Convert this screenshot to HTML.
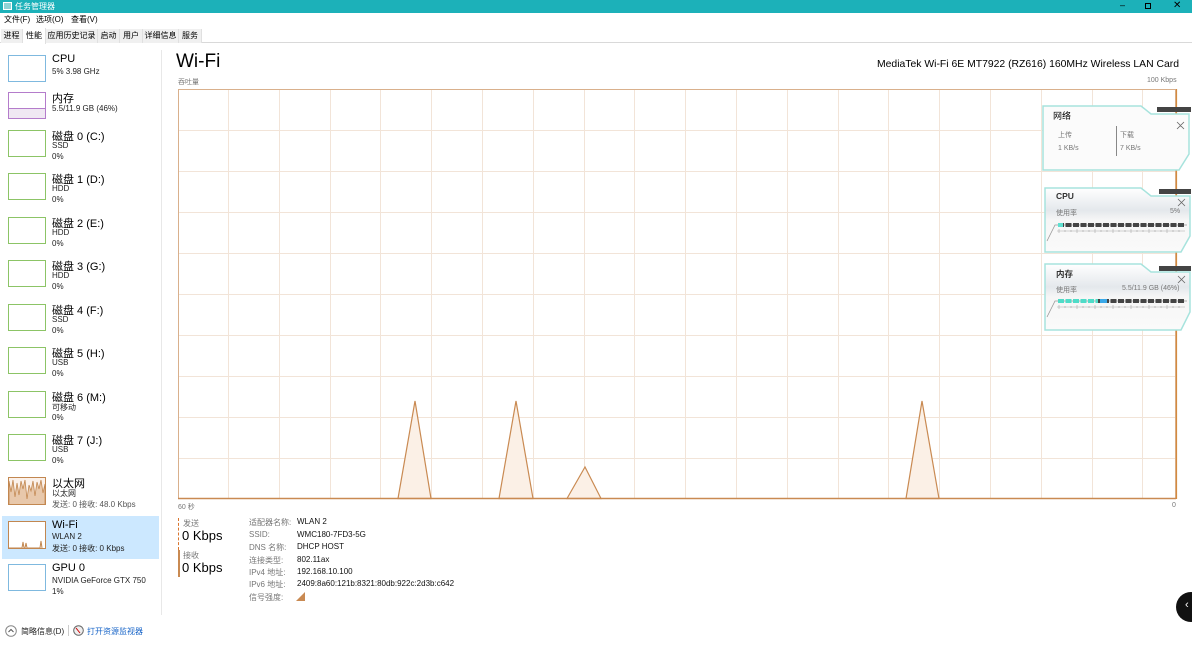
<!DOCTYPE html>
<html><head><meta charset="utf-8">
<style>
*{margin:0;padding:0;box-sizing:border-box}
body{width:1192px;height:646px;overflow:hidden;background:#fff;font-family:"Liberation Sans","Noto Sans CJK SC",sans-serif;color:#000;position:relative}
.a{position:absolute;white-space:nowrap}
.tb{left:0;top:0;width:1192px;height:13px;background:#1cb1b9}
.menu{top:14px;font-size:8px}
.tabs{top:29px;left:0;width:1192px;height:14px;border-bottom:1px solid #d9d9d9}
.tab{position:absolute;top:29px;height:14px;font-size:8px;line-height:14px;text-align:center;border-right:1px solid #e0e0e0;background:#f0f0f0;overflow:hidden}
.th{position:absolute;left:8px;width:38px;height:27px;border:1px solid}
.t1{font-size:11px;left:52px}
.t2{font-size:8px;left:52px;color:#222}
.lbl{font-size:8px;color:#777}
.val{font-size:8px;color:#111}
</style></head><body>
<div class="a tb"></div>
<div class="a" style="left:3px;top:2px;width:9px;height:8px;border:1px solid #fff;background:#8fd3d6"></div>
<div class="a" style="left:15px;top:1px;font-size:8px;color:#fff">任务管理器</div>
<div class="a" style="left:1120px;top:0;font-size:9px;color:#000">&#8211;</div>
<div class="a" style="left:1145px;top:3px;width:6px;height:6px;border:1px solid #000"></div>
<div class="a" style="left:1173px;top:0;font-size:10px">✕</div>
<div class="a menu" style="left:4px">文件(F)</div>
<div class="a menu" style="left:36px">选项(O)</div>
<div class="a menu" style="left:71px">查看(V)</div>
<div class="a tabs"></div>
<div class="tab" style="left:1px;width:22px">进程</div>
<div class="tab" style="left:23px;width:23px;background:#fff;top:28px;height:16px;line-height:16px">性能</div>
<div class="tab" style="left:46px;width:52px">应用历史记录</div>
<div class="tab" style="left:98px;width:22px">启动</div>
<div class="tab" style="left:120px;width:23px">用户</div>
<div class="tab" style="left:143px;width:36px">详细信息</div>
<div class="tab" style="left:179px;width:23px">服务</div>

<div class="a" style="left:161px;top:50px;width:1px;height:565px;background:#e8e8e8"></div>
<div class="a" style="left:2px;top:516px;width:157px;height:43px;background:#cce8ff"></div>

<div class="th" style="top:55px;border-color:#7fb9df"></div>
<div class="a t1" style="top:53px">CPU</div><div class="a t2" style="top:67px">5% 3.98 GHz</div>
<div class="th" style="top:92px;border-color:#b47ccb"><div style="position:absolute;left:0;right:0;bottom:0;height:10px;background:#f0e8f3;border-top:1px solid #b47ccb"></div></div>
<div class="a t1" style="top:90px">内存</div><div class="a t2" style="top:104px">5.5/11.9 GB (46%)</div>

<div class="th" style="top:130px;border-color:#8cc466"></div><div class="a t1" style="top:128px">磁盘 0 (C:)</div><div class="a t2" style="top:141px">SSD</div><div class="a t2" style="top:152px">0%</div>
<div class="th" style="top:173px;border-color:#8cc466"></div><div class="a t1" style="top:171px">磁盘 1 (D:)</div><div class="a t2" style="top:184px">HDD</div><div class="a t2" style="top:195px">0%</div>
<div class="th" style="top:217px;border-color:#8cc466"></div><div class="a t1" style="top:215px">磁盘 2 (E:)</div><div class="a t2" style="top:228px">HDD</div><div class="a t2" style="top:239px">0%</div>
<div class="th" style="top:260px;border-color:#8cc466"></div><div class="a t1" style="top:258px">磁盘 3 (G:)</div><div class="a t2" style="top:271px">HDD</div><div class="a t2" style="top:282px">0%</div>
<div class="th" style="top:304px;border-color:#8cc466"></div><div class="a t1" style="top:302px">磁盘 4 (F:)</div><div class="a t2" style="top:315px">SSD</div><div class="a t2" style="top:326px">0%</div>
<div class="th" style="top:347px;border-color:#8cc466"></div><div class="a t1" style="top:345px">磁盘 5 (H:)</div><div class="a t2" style="top:358px">USB</div><div class="a t2" style="top:369px">0%</div>
<div class="th" style="top:391px;border-color:#8cc466"></div><div class="a t1" style="top:389px">磁盘 6 (M:)</div><div class="a t2" style="top:402px">可移动</div><div class="a t2" style="top:413px">0%</div>
<div class="th" style="top:434px;border-color:#8cc466"></div><div class="a t1" style="top:432px">磁盘 7 (J:)</div><div class="a t2" style="top:445px">USB</div><div class="a t2" style="top:456px">0%</div>

<svg class="a" style="left:8px;top:477px" width="38" height="28"><rect x="0.5" y="0.5" width="37" height="27" fill="#fbf1ea" stroke="#c28750"/>
<polyline points="1,27 1,4 3,15 5,3 7,20 9,6 11,18 13,4 15,12 17,3 19,22 21,8 23,14 25,4 27,19 29,5 31,12 33,3 35,16 37,7 37,27" fill="#e8c8ab" stroke="#c28750" stroke-width="0.8"/></svg>
<div class="a t1" style="top:475px">以太网</div><div class="a t2" style="top:488px">以太网</div><div class="a t2" style="top:499px;color:#555">发送: 0 接收: 48.0 Kbps</div>

<svg class="a" style="left:8px;top:521px" width="38" height="28"><rect x="0.5" y="0.5" width="37" height="27" fill="#fff" stroke="#c28750"/>
<polyline points="1,27 14,27 15,21 16,27 17,27 18,22 19,27 32,27 33,20 34,27" fill="none" stroke="#c28750"/></svg>
<div class="a t1" style="top:519px">Wi-Fi</div><div class="a t2" style="top:532px">WLAN 2</div><div class="a t2" style="top:543px">发送: 0 接收: 0 Kbps</div>

<div class="th" style="top:564px;border-color:#7fb9df"></div>
<div class="a t1" style="top:562px">GPU 0</div><div class="a t2" style="top:576px">NVIDIA GeForce GTX 750</div><div class="a t2" style="top:587px">1%</div>

<div class="a" style="left:176px;top:51px;font-size:19px">Wi-Fi</div>
<div class="a" style="left:877px;top:59px;font-size:10.4px">MediaTek Wi-Fi 6E MT7922 (RZ616) 160MHz Wireless LAN Card</div>
<div class="a lbl" style="left:178px;top:77px;font-size:7px">吞吐量</div>
<div class="a lbl" style="left:1147px;top:77px;font-size:7px">100 Kbps</div>

<svg class="a" style="left:0;top:0" width="1192" height="646">
<g stroke="#f2e4d8" stroke-width="1">
<line x1="228.5" y1="89" x2="228.5" y2="499"/><line x1="279.5" y1="89" x2="279.5" y2="499"/><line x1="330.5" y1="89" x2="330.5" y2="499"/><line x1="380.5" y1="89" x2="380.5" y2="499"/><line x1="431.5" y1="89" x2="431.5" y2="499"/><line x1="482.5" y1="89" x2="482.5" y2="499"/><line x1="533.5" y1="89" x2="533.5" y2="499"/><line x1="584.5" y1="89" x2="584.5" y2="499"/><line x1="634.5" y1="89" x2="634.5" y2="499"/><line x1="685.5" y1="89" x2="685.5" y2="499"/><line x1="736.5" y1="89" x2="736.5" y2="499"/><line x1="787.5" y1="89" x2="787.5" y2="499"/><line x1="838.5" y1="89" x2="838.5" y2="499"/><line x1="888.5" y1="89" x2="888.5" y2="499"/><line x1="939.5" y1="89" x2="939.5" y2="499"/><line x1="990.5" y1="89" x2="990.5" y2="499"/><line x1="1041.5" y1="89" x2="1041.5" y2="499"/><line x1="1092.5" y1="89" x2="1092.5" y2="499"/><line x1="1142.5" y1="89" x2="1142.5" y2="499"/>
<line x1="178" y1="130.5" x2="1176" y2="130.5"/><line x1="178" y1="171.5" x2="1176" y2="171.5"/><line x1="178" y1="212.5" x2="1176" y2="212.5"/><line x1="178" y1="253.5" x2="1176" y2="253.5"/><line x1="178" y1="294.5" x2="1176" y2="294.5"/><line x1="178" y1="335.5" x2="1176" y2="335.5"/><line x1="178" y1="376.5" x2="1176" y2="376.5"/><line x1="178" y1="417.5" x2="1176" y2="417.5"/><line x1="178" y1="458.5" x2="1176" y2="458.5"/>
</g>
<rect x="178.5" y="89.5" width="997" height="409" fill="none" stroke="#d9b08c"/>
<g fill="#fbf0e6" stroke="#c98a52" stroke-width="1.2">
<polygon points="398,498.5 415,401 431,498.5"/><polygon points="499,498.5 516,401 533,498.5"/><polygon points="567,498.5 585,467 601,498.5"/><polygon points="906,498.5 922,401 939,498.5"/>
</g>
<line x1="178" y1="498.5" x2="1176" y2="498.5" stroke="#c98a52" stroke-width="1.5"/>
<line x1="1176.5" y1="89" x2="1176.5" y2="499" stroke="#d48a3e" stroke-width="1.2"/>
</svg>
<div class="a lbl" style="left:178px;top:502px;font-size:7px">60 秒</div>
<div class="a lbl" style="left:1172px;top:502px;font-size:7px">0</div>

<div class="a" style="left:178px;top:518px;width:0;height:32px;border-left:1px dashed #d9762f"></div>
<div class="a lbl" style="left:183px;top:518px">发送</div>
<div class="a" style="left:182px;top:528px;font-size:13px">0 Kbps</div>
<div class="a" style="left:178px;top:550px;width:2px;height:27px;background:#c98a52"></div>
<div class="a lbl" style="left:183px;top:550px">接收</div>
<div class="a" style="left:182px;top:560px;font-size:13px">0 Kbps</div>

<div class="a lbl" style="left:249px;top:517px">适配器名称:</div><div class="a val" style="left:297px;top:517px">WLAN 2</div>
<div class="a lbl" style="left:249px;top:530px">SSID:</div><div class="a val" style="left:297px;top:530px">WMC180-7FD3-5G</div>
<div class="a lbl" style="left:249px;top:542px">DNS 名称:</div><div class="a val" style="left:297px;top:542px">DHCP HOST</div>
<div class="a lbl" style="left:249px;top:555px">连接类型:</div><div class="a val" style="left:297px;top:555px">802.11ax</div>
<div class="a lbl" style="left:249px;top:567px">IPv4 地址:</div><div class="a val" style="left:297px;top:567px">192.168.10.100</div>
<div class="a lbl" style="left:249px;top:579px">IPv6 地址:</div><div class="a val" style="left:297px;top:579px">2409:8a60:121b:8321:80db:922c:2d3b:c642</div>
<div class="a lbl" style="left:249px;top:592px">信号强度:</div>
<svg class="a" style="left:295px;top:591px" width="12" height="10"><polygon points="1,10 10,10 10,1" fill="#c98a52"/></svg>

<svg class="a" style="left:5px;top:625px" width="12" height="12"><circle cx="6" cy="6" r="5.3" fill="none" stroke="#888"/><polyline points="3.5,7 6,4.5 8.5,7" fill="none" stroke="#555"/></svg>
<div class="a" style="left:21px;top:626px;font-size:8px;color:#222">简略信息(D)</div>
<div class="a" style="left:68px;top:625px;width:1px;height:11px;background:#ccc"></div>
<svg class="a" style="left:73px;top:625px" width="11" height="11"><circle cx="5.5" cy="5.5" r="4.8" fill="#eee" stroke="#666"/><line x1="3" y1="3" x2="7" y2="8" stroke="#c00"/></svg>
<div class="a" style="left:87px;top:626px;font-size:8px;color:#1a66c8">打开资源监视器</div>

<div class="a" style="left:1176px;top:592px;width:30px;height:30px;border-radius:50%;background:#111"></div>
<div class="a" style="left:1185px;top:599px;color:#fff;font-size:11px">‹</div>

<svg class="a" style="left:1041px;top:104px" width="151" height="240">
<defs><linearGradient id="g" x1="0" y1="0" x2="0" y2="1"><stop offset="0" stop-color="#fff"/><stop offset="0.35" stop-color="#e4e8ec"/><stop offset="0.5" stop-color="#f6f6f6"/><stop offset="1" stop-color="#fafafa"/></linearGradient></defs>
<g fill="#fbfbfb" stroke="#a7e3dd" stroke-width="1.5">
<polygon points="2,2 100,2 110,10 148,10 148,50 138,66 2,66"/>
<polygon points="4,84 100,84 110,92 149,92 149,132 140,148 4,148" fill="url(#g)"/>
<polygon points="4,160 100,160 110,168 149,168 149,208 140,226 4,226" fill="url(#g)"/>
</g>
<g fill="#444"><rect x="116" y="3" width="34" height="5"/><rect x="118" y="85" width="32" height="5"/><rect x="118" y="162" width="32" height="5"/></g>
<g stroke="#666" stroke-width="0.8"><path d="M136,18l7,7M143,18l-7,7M137,95l7,7M144,95l-7,7M137,172l7,7M144,172l-7,7"/></g>
<line x1="75.5" y1="22" x2="75.5" y2="52" stroke="#888"/>
<path d="M6,137 L14,121 L146,121" fill="none" stroke="#999" stroke-width="0.8"/>
<path d="M6,213 L14,197 L146,197" fill="none" stroke="#999" stroke-width="0.8"/>
<line x1="17" y1="121" x2="143" y2="121" stroke="#444" stroke-width="4" stroke-dasharray="6,1.5"/>
<line x1="17" y1="121" x2="22" y2="121" stroke="#5ee0d0" stroke-width="4"/>
<line x1="17" y1="197" x2="143" y2="197" stroke="#444" stroke-width="4" stroke-dasharray="6,1.5"/>
<line x1="17" y1="197" x2="57" y2="197" stroke="#4fdcc8" stroke-width="4" stroke-dasharray="6,1.5"/>
<line x1="59" y1="197" x2="66" y2="197" stroke="#3aa8e8" stroke-width="4"/>
<g stroke="#aaa" stroke-width="0.6"><path d="M16,127h128M16,203h128"/>
<path d="M18,125v4M24,126v2M30,126v2M36,125v4M42,126v2M48,126v2M54,125v4M60,126v2M66,126v2M72,125v4M78,126v2M84,126v2M90,125v4M96,126v2M102,126v2M108,125v4M114,126v2M120,126v2M126,125v4M132,126v2M138,126v2"/>
<path d="M18,201v4M24,202v2M30,202v2M36,201v4M42,202v2M48,202v2M54,201v4M60,202v2M66,202v2M72,201v4M78,202v2M84,202v2M90,201v4M96,202v2M102,202v2M108,201v4M114,202v2M120,202v2M126,201v4M132,202v2M138,202v2"/></g>
</svg>
<div class="a" style="left:1053px;top:109px;font-size:9px">网络</div>
<div class="a lbl" style="left:1058px;top:130px;font-size:7px">上传</div>
<div class="a lbl" style="left:1120px;top:130px;font-size:7px">下载</div>
<div class="a lbl" style="left:1058px;top:145px;font-size:7px">1 KB/s</div>
<div class="a lbl" style="left:1120px;top:145px;font-size:7px">7 KB/s</div>
<div class="a" style="left:1056px;top:191px;font-size:8.5px;font-weight:bold;color:#333">CPU</div>
<div class="a lbl" style="left:1056px;top:208px;font-size:7px">使用率</div>
<div class="a lbl" style="left:1170px;top:208px;font-size:7px">5%</div>
<div class="a" style="left:1056px;top:268px;font-size:8.5px;font-weight:bold;color:#333">内存</div>
<div class="a lbl" style="left:1056px;top:285px;font-size:7px">使用率</div>
<div class="a lbl" style="left:1122px;top:285px;font-size:7px">5.5/11.9 GB (46%)</div>
</body></html>
